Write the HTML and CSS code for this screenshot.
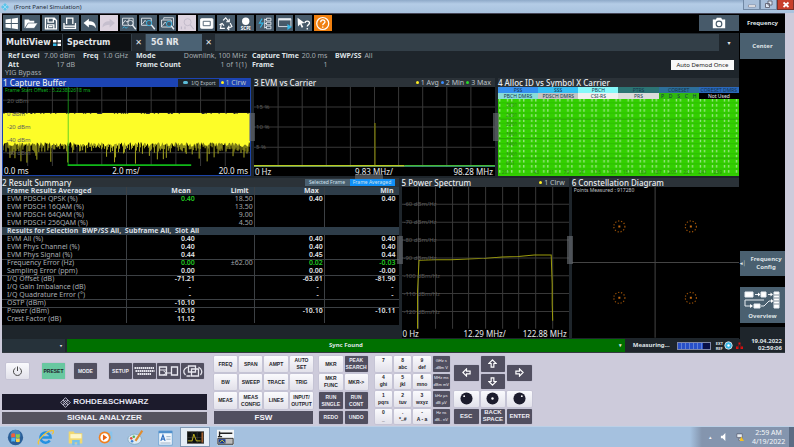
FILE: index.html
```html
<!DOCTYPE html>
<html lang="en">
<head>
<meta charset="utf-8">
<meta name="viewport" content="width=device-width, initial-scale=1">
<title>Signal Analyzer</title>
<link rel="stylesheet" href="styles.css">
</head>
<body>
<header class="titlebar">
  <svg class="ic" viewBox="0 0 8 8"><path d="M4 0l4 4-4 4-4-4z" fill="#5cc4ea"/><path d="M2 2l4 4M6 2L2 6" stroke="#c6e8fa" stroke-width=".6"/></svg>
  <span>(Front Panel Simulation)</span>
  <div class="winbtns">
    <button aria-label="Minimize"><svg viewBox="0 0 14 9"><path d="M4 5h7v2H4z" fill="#fff" stroke="#667" stroke-width=".5"/></svg></button>
    <button aria-label="Restore"><svg viewBox="0 0 14 9"><path d="M6.500 1h4v4h-4zM4 3.500h4v4H4z" fill="#dfe8f4" stroke="#556" stroke-width=".8"/></svg></button>
    <button class="close" aria-label="Close"><svg viewBox="0 0 14 9"><path d="M5 2.500l5 4.500M10 2.500L5 7" stroke="#fff" stroke-width="1.700"/></svg></button>
  </div>
</header>

<div class="app">
  <main class="main">
    <nav class="toolbar">
      <div class="tools">
        <button aria-label="Windows"><svg viewBox="0 0 18 17"><path d="M2 4l6-1v5H2zM9 3l7-1v6H9zM2 9h6v5l-6-1zM9 9h7v6l-7-1z" fill="#fff"/></svg></button>
        <button aria-label="Open"><svg viewBox="0 0 18 17"><path d="M2 14V4h5l1 1.500h5V8H6z" fill="#fff"/><path d="M6 8h11l-4 6H2.500z" fill="#fff" stroke="#475a6a" stroke-width=".7"/></svg></button>
        <button aria-label="Save"><svg viewBox="0 0 18 17" fill="none" stroke="#fff" stroke-width="1.500"><path d="M3 2.500h10l2.500 2.500v9.500H3zM6 3v4h6V3M5.500 14.500V10h7v4.500M7 12h4"/></svg></button>
        <button aria-label="Print"><svg viewBox="0 0 18 17" fill="none" stroke="#fff" stroke-width="1.500"><path d="M5.500 9V2.500h7V9M2.500 8v6h13V8"/><path d="M3 11.500h12"/></svg></button>
        <button aria-label="Undo"><svg viewBox="0 0 18 17"><path d="M2 8l6-5v3c5 0 8 2 8 8-2-3-4-4-8-4v3z" fill="#fff"/></svg></button>
        <button class="off" aria-label="Redo"><svg viewBox="0 0 18 17"><path d="M16 8l-6-5v3c-5 0-8 2-8 7 2-2 4-3 8-3v3z" fill="#c6bfce"/></svg></button>
        <button aria-label="Zoom graph"><svg viewBox="0 0 18 17" fill="none" stroke="#e8edf2"><path d="M2 2.500h12v8H2zM2 9l3-4 2 2 3-4"/><path d="M2 14l2-2 2 2 2-2" stroke="#35b7e6"/><circle cx="11" cy="8" r="3" fill="#475a6a"/><path d="M13 10l4 5" stroke-width="1.600"/></svg></button>
        <button aria-label="Zoom"><svg viewBox="0 0 18 17" fill="none" stroke="#e8edf2"><path d="M2 2.500h11v8H2zM3 9l3-4 2 2"/><circle cx="10.500" cy="8" r="3" fill="#475a6a" stroke="#35b7e6"/><path d="M13 10l4 5" stroke-width="1.600"/></svg></button>
        <button aria-label="Multi zoom"><svg viewBox="0 0 18 17" fill="none" stroke="#e8edf2"><path d="M4.500 4V2h11v9M2 4.500h11v8H2zM3 11l3-4 2 2"/><circle cx="10.500" cy="9" r="3" fill="#475a6a" stroke="#35b7e6"/><path d="M13 11l3 4" stroke-width="1.600"/></svg></button>
        <button class="off" aria-label="Zoom off"><svg viewBox="0 0 18 17" fill="none" stroke="#bfb8c8"><circle cx="10" cy="7" r="4"/><path d="M13 10l4 5M3 12v3M7 12v3" stroke-width="1.300"/></svg></button>
        <button aria-label="Full screen"><svg viewBox="0 0 18 17" fill="none" stroke="#fff"><rect x="2" y="3" width="14" height="11" rx="1" fill="#fff"/><path d="M5 6h8v5H5z" stroke="#475a6a"/></svg></button>
        <button aria-label="Sequencer"><svg viewBox="0 0 18 17" fill="none" stroke="#fff" stroke-width="1.300"><path d="M6 5l3-3 3 4M9.500 6.500H13V3M14 8l2 4-4 2M13 11l-2 3 2 2M8 14H3l1-5M2 10l3-1.500L7 11"/></svg></button>
        <button aria-label="SCPI"><svg viewBox="0 0 18 17"><circle cx="9" cy="6" r="4.200" fill="#fff"/><text class="icontext" x="9" y="15.500" text-anchor="middle">SCPI</text></svg></button>
        <button aria-label="Tree"><svg viewBox="0 0 18 17" fill="none" stroke="#e8edf2"><path d="M9 3v11M9 4h2M9 8.500h2M9 13h2"/><path d="M11 2.500h5v3h-5zM11 7h5v3h-5zM11 11.500h5v3h-5z"/><path d="M6 3L3 8h4l-3 5" stroke="#35b7e6" stroke-width="1.300"/></svg></button>
        <button aria-label="Window"><svg viewBox="0 0 18 17"><path d="M2 3h14v9H2z" fill="none" stroke="#e8edf2"/><path d="M2 3h14v2H2z" fill="#e8edf2"/><path d="M12 9l5 3.500-5 3.500z" fill="#35b7e6"/></svg></button>
        <button aria-label="Context help"><svg viewBox="0 0 18 17"><path d="M2 2l8 6-3.500.5 2 4-1.800.8-1.700-4L2.500 12z" fill="#fff"/><path d="M10.500 8c0-3 5-3 5 0 0 2-2.500 2-2.500 4M13 13.500v1.800" stroke="#fff" stroke-width="1.500" fill="none"/></svg></button>
        <button class="help" aria-label="Help"><svg viewBox="0 0 18 17"><circle cx="9" cy="8.500" r="6.800" fill="none" stroke="#fff" stroke-width="1.400"/><path d="M6.700 7c0-3.500 5-3.200 4.800-.3C11.300 8.500 9 8.500 9 10.500M9 11.800v1.600" stroke="#fff" stroke-width="1.500" fill="none"/></svg></button>
      </div>
      <button class="camera" aria-label="Screenshot"><svg viewBox="0 0 18 17"><path d="M2 4h3.500l1-2h5l1 2H16v10H2z" fill="#fff"/><circle cx="9" cy="9" r="3.200" fill="none" stroke="#475a6a" stroke-width="1.300"/></svg></button>
    </nav>

    <div class="tabs">
      <button class="tab first">MultiView <svg class="ic" viewBox="0 0 8 6"><path d="M0 0h3.500v2.500H0zM4.500 0H8v2.500H4.500zM4.500 3.500H8V6H4.500z" fill="#fff"/><path d="M0 3.500h3.500V6H0z" fill="#35b7e6"/></svg></button>
      <button class="tab">Spectrum</button><button class="x" aria-label="Close Spectrum">✕</button>
      <button class="tab on">5G NR</button><button class="x" aria-label="Close 5G NR">✕</button>
      <button class="more" aria-label="More tabs">▾</button>
    </div>

    <section class="info">
      <dl>
        <div class="pair a"><dt>Ref Level</dt><dd>7.00 dBm</dd><dt>Att</dt><dd>17 dB</dd></div>
        <div class="pair b"><dt>Freq</dt><dd>1.0 GHz</dd></div>
        <div class="pair c"><dt>Mode</dt><dd>Downlink, 100 MHz</dd><dt>Frame Count</dt><dd>1 of 1(1)</dd></div>
        <div class="pair d"><dt>Capture Time</dt><dd>20.0 ms</dd><dt>Frame</dt><dd>1</dd></div>
        <div class="pair"><dt>BWP/SS</dt><dd>All</dd></div>
      </dl>
      <p>YIG Bypass</p>
      <button class="demod">Auto Demod Once</button>
    </section>

    <div class="windows">
      <div class="row top">
        <section class="win active">
          <h2><span>1 Capture Buffer</span><button class="iq"><i></i>I/Q Export</button><b class="y"></b>1 Clrw</h2>
          <div class="plot">
            <svg id="capture" viewBox="0 0 248 82" preserveAspectRatio="none"></svg>
            <p class="note green">Frame Start Offset : 5.223802618 ms</p>
            <ul class="ylab cap"><li>20 dBm</li><li>0 dBm</li><li>-20 dBm</li><li>-40 dBm</li><li>-60 dBm</li></ul>
          </div>
          <footer><span>0.0 ms</span><span>2.0 ms/</span><span>20.0 ms</span></footer>
        </section>
        <section class="win">
          <h2><span>3 EVM vs Carrier</span><b class="y"></b>1 Avg<b class="bl"></b>2 Min<b class="g"></b>3 Max</h2>
          <div class="plot">
            <svg viewBox="0 0 240 80" preserveAspectRatio="none" fill="none">
              <path d="M24 0v80M48 0v80M72 0v80M96 0v80M120 0v80M144 0v80M168 0v80M192 0v80M216 0v80M0 20h240M0 40h240M0 60h240" stroke="#383838"/>
              <path d="M0 79.500h240" stroke="#2878c8"/><path d="M0 78.500h150" stroke="#b8cc20" stroke-width="1.500"/><path d="M150 78.500h90" stroke="#48b838" stroke-width="1.500"/>
              <path d="M120.500 78V36" stroke="#8c8c00"/>
            </svg>
            <ul class="ylab evm"><li>15 %</li><li>10 %</li><li>5 %</li></ul>
          </div>
          <footer><span>0 Hz</span><span>9.83 MHz/</span><span>98.28 MHz</span></footer>
          <i class="handle l"></i><i class="handle bottom"></i>
        </section>
        <section class="win">
          <h2><span>4 Alloc ID vs Symbol X Carrier</span></h2>
          <div class="legend">
            <span class="pss">PSS</span><span class="sss">SSS</span><span class="pbch">PBCH</span><span class="ptrs">PTRS</span><span class="cor">CORESET</span><span class="cord">CORESET DMRS</span>
            <span class="pbd">PBCH DMRS</span><span class="pdd">PDSCH DMRS</span><span class="csi">CSI-RS</span><span class="prs">PRS</span><span class="pdsch"><i>P</i><i>D</i><i>S</i><i>C</i><i>H</i></span><span class="nu">Not Used</span>
          </div>
          <div class="plot alloc">
            <svg viewBox="0 0 240 76" preserveAspectRatio="none">
              <defs><pattern id="pilot" width="12" height="5" patternUnits="userSpaceOnUse"><path d="M9 0h1.300v2.500H9zM1 0h1.300v2.500H1z" fill="#9be488"/><path d="M0 4h12" stroke="#2cb804" stroke-width=".8"/></pattern></defs>
              <path d="M0 0h240v76H0z" fill="#33d000"/><path d="M0 0h240v74H0z" fill="url(#pilot)"/>
              <path d="M0 20h240M0 39h240M0 58h240" stroke="#259a06" stroke-width=".6"/>
            </svg>
            <ul class="ylab al"><li>3001</li><li>2601</li><li>2201</li><li>1801</li><li>1401</li><li>1001</li><li>601</li></ul>
            <ul class="xlab"><li>201</li><li></li><li>43</li><li>61</li><li>79</li><li>97</li><li>115</li><li>133</li><li>151</li><li>169</li><li>187</li><li>205</li><li>223</li><li>241</li><li>259</li><li></li></ul>
          </div>
          <i class="handle l"></i>
        </section>
      </div>

      <div class="row bot">
        <section class="win">
          <h2><span>2 Result Summary</span><button class="seg">Selected Frame</button><button class="seg on">Frame Averaged</button></h2>
          <table>
            <colgroup><col class="c1"><col class="c2"><col class="c3"><col class="c4"><col class="c5"></colgroup>
            <thead><tr><th>Frame Results Averaged</th><th>Mean</th><th>Limit</th><th>Max</th><th>Min</th></tr></thead>
            <tbody>
              <tr><td>EVM PDSCH QPSK (%)</td><td class="gr">0.40</td><td>18.50</td><td>0.40</td><td>0.40</td></tr>
              <tr><td>EVM PDSCH 16QAM (%)</td><td></td><td>13.50</td><td></td><td></td></tr>
              <tr><td>EVM PDSCH 64QAM (%)</td><td></td><td>9.00</td><td></td><td></td></tr>
              <tr><td>EVM PDSCH 256QAM (%)</td><td></td><td>4.50</td><td></td><td></td></tr>
              <tr><th colspan="5">Results for Selection&nbsp; BWP/SS All,&nbsp; Subframe All,&nbsp; Slot All</th></tr>
              <tr><td>EVM All (%)</td><td>0.40</td><td></td><td>0.40</td><td>0.40</td></tr>
              <tr><td>EVM Phys Channel (%)</td><td>0.40</td><td></td><td>0.40</td><td>0.40</td></tr>
              <tr><td>EVM Phys Signal (%)</td><td>0.44</td><td></td><td>0.45</td><td>0.44</td></tr>
              <tr class="ln"><td>Frequency Error (Hz)</td><td class="gr">0.00</td><td>±62.00</td><td class="gr">0.02</td><td class="gr">-0.03</td></tr>
              <tr><td>Sampling Error (ppm)</td><td>0.00</td><td></td><td>0.00</td><td>-0.00</td></tr>
              <tr class="ln"><td>I/Q Offset (dB)</td><td>-71.21</td><td></td><td>-63.61</td><td>-81.90</td></tr>
              <tr class="dash"><td>I/Q Gain Imbalance (dB)</td><td>-</td><td></td><td>-</td><td>-</td></tr>
              <tr class="dash"><td>I/Q Quadrature Error (°)</td><td>-</td><td></td><td>-</td><td>-</td></tr>
              <tr class="ln"><td>OSTP (dBm)</td><td>-10.10</td><td></td><td></td><td></td></tr>
              <tr class="ln"><td>Power (dBm)</td><td>-10.10</td><td></td><td>-10.10</td><td>-10.11</td></tr>
              <tr><td>Crest Factor (dB)</td><td>11.12</td><td></td><td></td><td></td></tr>
            </tbody>
          </table>
          <div class="rest"></div>
        </section>
        <section class="win">
          <h2><span>5 Power Spectrum</span><b class="y"></b>1 Clrw</h2>
          <div class="plot">
            <svg viewBox="0 0 167 143" preserveAspectRatio="none" fill="none">
              <path d="M16.500 0v143M33.500 0v143M50.500 0v143M66.500 0v143M83.500 0v143M100.500 0v143M116.500 0v143M133.500 0v143M150.500 0v143M0 17.500h167M0 35.500h167M0 53.500h167M0 71.500h167M0 89.500h167M0 107.500h167M0 125.500h167" stroke="#383838"/>
              <path d="M15.500 143V105L17 74l16-.5h16L82 72l18-1.500 16-.5 16-1.500h17L150 98v20l.5 17" stroke="#9c9c0c"/>
            </svg>
            <ul class="ylab pow"><li>-60 dBm/Hz</li><li>-70 dBm/Hz</li><li>-80 dBm/Hz</li><li>-90 dBm/Hz</li><li>-100 dBm/Hz</li><li>-110 dBm/Hz</li><li>-120 dBm/Hz</li></ul>
          </div>
          <footer><span>0 Hz</span><span>12.29 MHz/</span><span>122.88 MHz</span></footer>
          <i class="handle l"></i>
        </section>
        <section class="win">
          <h2><span>6 Constellation Diagram</span></h2>
          <div class="plot">
            <svg viewBox="0 0 166 151" fill="none" preserveAspectRatio="none">
              <path d="M82.500 0v151M0 75.500h166" stroke="#444"/>
              <g stroke="#9c5208" stroke-width="1.200" stroke-dasharray="1.200 1.800"><circle cx="47" cy="39.500" r="5.500"/><circle cx="118" cy="39.500" r="5.500"/><circle cx="47" cy="111" r="5.500"/><circle cx="118" cy="111" r="5.500"/></g>
              <path d="M46 38.500h2v2h-2zM117 38.500h2v2h-2zM46 110h2v2h-2zM117 110h2v2h-2z" fill="#c06810"/>
            </svg>
            <p class="note">Points Measured : 917280</p>
          </div>
          <i class="handle l"></i>
        </section>
      </div>
    </div>
  </main>

  <aside class="side">
    <h3>Frequency</h3>
    <button class="s1">Center</button>
    <div class="gap1"></div>
    <button class="s2"><i>◂│</i><span>Frequency Config</span></button>
    <div class="gap2"></div>
    <button class="s3">
      <svg viewBox="0 0 36 18" fill="none" stroke="#e8edf2"><path d="M1 1h8v5H1zM17 1h5v5h-5zM10 13h6v4h-6z" fill="#fff"/><path d="M30 1h5v16h-5z" fill="#fff"/><path d="M30 4h5M30 7h5M30 10h5M30 13h5" stroke="#4a6070" stroke-width=".7"/><path d="M11 3.500h4M24 3.500h4M20 9H1v6h7M17 15h3l5-5h3"/><path d="M14 1.500l2.500 2-2.500 2zM26.500 1.500l2.500 2-2.500 2zM6 13l3 2-3 2zM27 8l2.500 2-2.500 2z" fill="#fff" stroke="none"/></svg>
      Overview
    </button>
    <div class="fill"></div>
  </aside>

  <div class="status">
    <span class="s-left">▾</span>
    <span class="s-msg">Sync Found<i>▾</i></span>
    <span class="meas">Measuring...</span>
    <span class="prog"><i></i></span>
    <span class="ext">EXT<br>REF</span>
    <svg class="dot ref" viewBox="0 0 9 9"><circle cx="4.500" cy="4.500" r="3.700" fill="#35b7e6" stroke="#cdd6de"/><circle cx="4.500" cy="4.500" r="1.200" fill="#fff"/></svg>
    <svg class="dot" viewBox="0 0 9 9"><path d="M3.500 1.500h2v2h-2zM1 5.500h2.500V8H1zM5.500 5.500H8V8H5.500z" fill="#e01010"/><path d="M4.500 3L2 7M4.500 3L7 7" stroke="#a01010" stroke-width=".6"/></svg>
    <time>19.04.2022<br>02:59:06</time>
  </div>
</div>

<section class="panel">
  <div class="sys">
    <div class="sysrow">
      <button class="key power" aria-label="Power"><svg viewBox="0 0 12 12" fill="none" stroke="#444"><path d="M4 3a4 4 0 1 0 4 0M6 1.500V6"/></svg></button>
      <button class="key preset">PRESET</button>
      <button class="key dk mode">MODE</button>
      <button class="key dk">SETUP</button>
      <button class="key dk" aria-label="Keyboard"><svg viewBox="0 0 22 12" fill="none" stroke="#e8e8f0"><path d="M1 3h20M2 6h19M4 9h14" stroke-width="2" stroke-dasharray="1.500 .5"/></svg></button>
      <button class="key dk" aria-label="Display"><svg viewBox="0 0 22 12" fill="none" stroke="#e8e8f0"><path d="M2 2h7v8H2zM14 2h6v8h-6z" stroke-width="1.300"/><path d="M2 5h7M9 8h5M6 6l3 2-3 2"/></svg></button>
      <button class="key dk" aria-label="Switch window"><svg viewBox="0 0 22 12" fill="none" stroke="#e8e8f0"><path d="M7 1h7v6H7zM10 4h7v7h-7zM4 10c-3-3-2-6 2-8M5 11h4M17 2c4 2 4 6 2 8" stroke-width="1.300"/></svg></button>
    </div>
    <div class="brand"><svg viewBox="0 0 12 12" fill="none" stroke="#c8c8dc"><path d="M6 .7L11.300 6 6 11.300.7 6zM3.300 3.300l5.400 5.400M8.700 3.300L3.300 8.700M6 3.500L8.500 6 6 8.500 3.500 6z"/></svg>ROHDE&amp;SCHWARZ</div>
    <div class="model">SIGNAL ANALYZER</div>
  </div>
  <div class="keys k4">
    <button class="key">FREQ</button><button class="key">SPAN</button><button class="key">AMPT</button><button class="key">AUTO<br>SET</button>
    <button class="key">BW</button><button class="key">SWEEP</button><button class="key">TRACE</button><button class="key">TRIG</button>
    <button class="key">MEAS</button><button class="key">MEAS<br>CONFIG</button><button class="key">LINES</button><button class="key">INPUT/<br>OUTPUT</button>
    <div class="fsw">FSW</div>
  </div>
  <div class="keys k2">
    <button class="key">MKR</button><button class="key dk">PEAK<br>SEARCH</button>
    <button class="key">MKR<br>FUNC</button><button class="key">MKR-&gt;</button>
    <button class="key dk">RUN<br>SINGLE</button><button class="key dk">RUN<br>CONT</button>
    <button class="key dk">REDO</button><button class="key dk">UNDO</button>
  </div>
  <div class="keys num">
    <button class="key">7<br>&nbsp;</button><button class="key">8<br>abc</button><button class="key">9<br>def</button><button class="key dk unit">GHz s<br>-dBm V</button>
    <button class="key">4<br>ghi</button><button class="key">5<br>jkl</button><button class="key">6<br>mno</button><button class="key dk unit">MHz ms<br>dBm mV</button>
    <button class="key">1<br>pqrs</button><button class="key">2<br>tuv</button><button class="key">3<br>wxyz</button><button class="key dk unit">kHz µs<br>dB µV</button>
    <button class="key">0<br>_</button><button class="key">.<br>*..#</button><button class="key">-<br>A - a</button><button class="key dk unit">Hz ns<br>dB.. nV</button>
  </div>
  <div class="keys nav">
    <button class="key dk side-l" aria-label="Left"><svg viewBox="0 0 10 10"><path d="M1 5l4-4v2.500h4v3H5V9z" fill="none" stroke="#fff" stroke-width="1.300"/></svg></button>
    <button class="key dk up" aria-label="Up"><svg viewBox="0 0 10 10"><path d="M5 1l4 4H6.500v4h-3V5H1z" fill="none" stroke="#fff" stroke-width="1.300"/></svg></button>
    <button class="key dk side-r" aria-label="Right"><svg viewBox="0 0 10 10"><path d="M9 5L5 1v2.500H1v3h4V9z" fill="none" stroke="#fff" stroke-width="1.300"/></svg></button>
    <button class="key dk down" aria-label="Down"><svg viewBox="0 0 10 10"><path d="M5 9l4-4H6.500V1h-3v4H1z" fill="none" stroke="#fff" stroke-width="1.300"/></svg></button>
    <button class="key knob" aria-label="Turn left"><svg viewBox="0 0 14 14"><circle cx="7" cy="7" r="6.500" fill="#1c1c2c"/><circle cx="4.500" cy="4.500" r="1" fill="#fff"/></svg></button>
    <button class="key knob" aria-label="Press knob"><svg viewBox="0 0 14 14"><circle cx="7" cy="7" r="6.500" fill="#1c1c2c"/><circle cx="7" cy="7" r="1.300" fill="#fff"/></svg></button>
    <button class="key knob" aria-label="Turn right"><svg viewBox="0 0 14 14"><circle cx="7" cy="7" r="6.500" fill="#1c1c2c"/><circle cx="9.500" cy="4.500" r="1" fill="#fff"/></svg></button>
    <button class="key dk">ESC</button><button class="key dk">BACK<br>SPACE</button><button class="key dk">ENTER</button>
  </div>
</section>

<footer class="taskbar">
  <button aria-label="Start"><svg viewBox="0 0 20 20"><circle cx="10" cy="10" r="9" fill="#2a5f98"/><circle cx="10" cy="7" r="6" fill="#5c9cd0" opacity=".6"/><path d="M5 6q2-1.500 4.500-.5v4Q7 9 5 10z" fill="#f0603a"/><path d="M10.500 6q2 1 4.500 0v4q-2 1-4.500 0z" fill="#90cc40"/><path d="M5 11q2-1 4.500 0v4Q7 14 5 15z" fill="#50b4f4"/><path d="M10.500 11q2 1 4.500 0v4q-2 1-4.500 0z" fill="#fcd040"/></svg></button>
  <button aria-label="Internet Explorer"><svg viewBox="0 0 20 20" fill="none"><path d="M15 13.500A6 6 0 1 1 16 10H5" stroke="#2490e0" stroke-width="3"/><path d="M2 18C-1 14 12 1 19 2c1 1 0 3-1 4" stroke="#f4c430" stroke-width="1.500"/></svg></button>
  <button aria-label="Explorer"><svg viewBox="0 0 20 20"><path d="M2 3h6l1 2h9v12H2z" fill="#f0d870"/><path d="M4 6h13v5H4z" fill="#fdf6c8"/><path d="M6 19v-6h9v6h-3v-3H9v3z" fill="#78c0ea"/></svg></button>
  <button aria-label="Media Player"><svg viewBox="0 0 20 20"><rect x="6" y="3" width="12" height="13" rx="1" fill="#88c4ec"/><circle cx="9" cy="10" r="7" fill="#f08020"/><circle cx="9" cy="10" r="5" fill="#fff"/><path d="M7 6.500l5 3.500-5 3.500z" fill="#e86010"/></svg></button>
  <button aria-label="Paint"><svg viewBox="0 0 20 20"><ellipse cx="9" cy="12" rx="8" ry="6" fill="#dcebf4" stroke="#80a8c0"/><circle cx="5" cy="11" r="1.500" fill="#e05040"/><circle cx="8" cy="9" r="1.500" fill="#50b050"/><circle cx="6" cy="14.500" r="1.500" fill="#4080d0"/><path d="M18 2l-8 12" stroke="#e08c30" stroke-width="2.500"/></svg></button>
  <button aria-label="WordPad"><svg viewBox="0 0 20 20"><path d="M2 3h16v16H2z" fill="#f0f6fc" stroke="#6ca0d0"/><path d="M2 2h16v3H2z" fill="#5090cc"/><path d="M4.500 14L7 7l2.500 7M5.500 12h3" stroke="#3070c0" stroke-width="1.400" fill="none"/><path d="M11 9h5M11 12h5M4 16.500h12" stroke="#90a8c0"/></svg></button>
  <button class="run" aria-label="Signal Analyzer"><svg viewBox="0 0 20 16"><path d="M0 1h20v14H0z" fill="#0c1010" stroke="#666"/><path d="M6 1v14M12 1v14M0 8h20" stroke="#444" stroke-width=".6"/><path d="M1 12h5l2-8 3 8h5" fill="none" stroke="#d8c820"/><path d="M17 2h2v12h-2z" fill="#a06030"/></svg></button>
  <button aria-label="Front Panel"><svg viewBox="0 0 20 18"><path d="M0 0h20v18H0z" fill="#f4f6f8"/><path d="M3 2v6M3 4h15M1 8h5" stroke="#222" stroke-width="1.600"/><path d="M1 10h18v7H1z" fill="#bbb" stroke="#222"/><path d="M2 11h8v5H2z" fill="#183890"/><path d="M3 15l3-3 3 3" stroke="#e8e020" fill="none"/></svg></button>
  <div class="tray">
    <span>▴</span>
    <svg viewBox="0 0 9 9"><path d="M1 3h2l3-3v9L3 6H1z" fill="#fff"/></svg>
    <svg viewBox="0 0 9 9"><path d="M1 1h6v4H1zM3 6h4v2H3z" fill="#e8eef4" stroke="#445" stroke-width=".6"/><path d="M6 4l3 5H4z" fill="#f4c020"/></svg>
    <time>2:59 AM<br>4/19/2022</time>
  </div>
</footer>
<script src="app.js"></script>
</body>
</html>
```
FILE: styles.css
```css
* { box-sizing: border-box; }
:root {
  --panel: #1e252b;
  --head: #2b3238;
  --btn: #4a6070;
  --fp: #cdcbdb;
}
body {
  margin: 0;
  min-height: 100vh;
  display: flex;
  flex-direction: column;
  background: var(--fp);
  color: #dfe3e6;
  font: 7px/8px "Noto Sans", "Open Sans", sans-serif;
}
button { font: inherit; color: inherit; border: 0; padding: 0; margin: 0; background: none; }
h2, h3, p, dl, dd, ul { margin: 0; padding: 0; }
ul { list-style: none; }
i { font-style: normal; }
svg { display: block; }

.titlebar {
  display: flex;
  align-items: center;
  gap: 5px;
  height: 13px;
  padding-left: 1px;
  background: linear-gradient(#8ea9c8, #b4cce6 30%, #a8c2de);
  color: #222c38;
  font-size: 6px;
}
.titlebar > .ic { width: 8px; height: 8px; }
.winbtns { margin-left: auto; display: flex; align-self: flex-start; }
.winbtns button { width: 17px; height: 10px; border: 1px solid #7088a4; border-top: 0; background: #a8bfda; }
.winbtns svg { width: 100%; height: 9px; }
.winbtns .close { background: #c8402c; border-color: #7a3028; }

.app {
  flex: 1;
  display: grid;
  grid-template-columns: minmax(0, 736fr) minmax(0, 46fr);
  grid-template-rows: minmax(0, 1fr) 14px;
  margin: 0 9px 0 2px;
  background: #000;
  border-top: 1px solid #445;
}
.main { display: flex; flex-direction: column; background: var(--panel); min-width: 0; }

.toolbar { display: flex; justify-content: space-between; background: #000; height: 19px; padding: 1px 0 2px 1px; }
.tools { display: grid; grid-template-columns: repeat(17, 1fr); gap: 2px; width: 44.7%; }
.tools button, .camera { background: #475a6a; display: flex; align-items: center; justify-content: center; }
.tools svg { width: 100%; height: 15px; }
.tools .off { background: #ddd3df; }
.tools .help { background: #f08010; }
.camera { width: 40px; }
.camera svg { width: 16px; height: 15px; }
.icontext { font: bold 5px "Noto Sans", sans-serif; fill: #fff; }

.tabs { display: flex; height: 17px; background: #333f48; font: bold 8px/16px "DejaVu Sans", sans-serif; color: #e2e5e8; margin-top: 1px; }
.tab { background: #0e1114; text-align: left; width: 68px; padding-left: 4px; margin-right: 1px; }
.tab.first { width: 60px; display: flex; align-items: center; justify-content: space-between; padding: 0 1px 0 4px; }
.tab .ic { width: 8px; height: 6px; }
.tab.on { background: #4b6274; width: 56px; margin: 0 0 0 1px; padding-left: 5px; }
.x { width: 13px; background: #222a31; }
.more { margin-left: auto; width: 20px; background: var(--panel); font-size: 6px; }

.info { position: relative; height: 27px; color: #a4abb0; }
.info dl { display: flex; padding: 0 0 0 6px; }
.pair { display: grid; grid-template-columns: auto auto; column-gap: 3px; line-height: 9px; align-content: start; justify-content: space-between; margin-right: 8px; white-space: nowrap; }
.pair dt { font-weight: bold; color: #dfe3e6; }
.pair dd { text-align: right; }
.pair.a { width: 67px; }
.pair.b { width: 45px; }
.pair.c { width: 108px; }
.pair.d { width: 75px; }
.info p { padding-left: 3px; line-height: 8px; }
.demod { position: absolute; right: 5px; top: 9px; width: 63px; height: 10px; background: #f8f8f8; color: #222; font-size: 6px; line-height: 10px; }

.windows { flex: 1; display: flex; flex-direction: column; gap: 2px; padding-bottom: 1px; min-height: 0; }
.row { display: grid; gap: 3px; min-height: 0; flex: 99 1 0; }
.row.bot { flex: 161 1 0; }
.top { grid-template-columns: minmax(0, 249fr) minmax(0, 241fr) minmax(0, 241fr); }
.bot { grid-template-columns: minmax(0, 396fr) minmax(0, 167fr) minmax(0, 167fr); }
.win { position: relative; display: flex; flex-direction: column; background: #000; min-height: 0; }
.win h2 { display: flex; align-items: center; gap: 2px; height: 9px; flex: none; background: var(--head); font-size: 7px; font-weight: normal; color: #bcc2c8; padding-right: 4px; white-space: nowrap; }
.win h2 span { color: #e8ebee; font-weight: 500; font-size: 8px; margin-right: auto; }
.win h2 b { width: 3px; height: 3px; border-radius: 50%; }
.y { background: #ffee22; } .bl { background: #3a8cff; } .g { background: #28d828; }
.active { border: 1px solid #1c44a8; border-top: 0; }
.active h2 { background: #1c44b4; }
.iq { display: flex; align-items: center; gap: 4px; background: #1e252b; width: 41px; height: 8px; font-size: 5px; padding: 0 2px 0 5px; }
.iq i { width: 5px; height: 3px; border-radius: 2px; background: #5cbcd8; }
.plot { position: relative; flex: 1; min-height: 0; }
.plot > svg { position: absolute; inset: 0; width: 100%; height: 100%; }
.note { position: absolute; left: 2px; top: 1px; font-size: 5px; line-height: 5px; color: #c0c4c8; }
.note.green { color: #10b020; }
.ylab { position: absolute; left: 2px; top: 0; height: 100%; display: flex; flex-direction: column; color: #5c5c5c; font-size: 6px; justify-content: space-between; }
.cap { padding: 10px 0 9px; left: 4px; }
.evm { padding: 16px 0; }
.al { padding: 2px 0 9px; left: 8px; color: #2d8a14; font-size: 5px; }
.pow { padding: 13px 0; }
.win > footer { display: flex; height: 9px; padding: 0 2px 0 1px; font-size: 8px; line-height: 9px; color: #e8ebee; white-space: nowrap; }
.win > footer span { flex: 1 1 0; text-align: center; }
.win > footer span:first-child { text-align: left; }
.win > footer span:last-child { text-align: right; }
.handle { position: absolute; left: -5px; top: 36%; width: 6px; height: 28px; background: rgba(110, 115, 120, .6); z-index: 1; }
.handle.bottom { top: auto; bottom: -3px; left: 42%; width: 28px; height: 5px; }

.legend { display: grid; grid-template-columns: repeat(6, minmax(0, 1fr)); font-size: 5px; line-height: 6px; text-align: center; color: #14344c; white-space: nowrap; }
.pss { background: #3590f0; } .sss { background: #36bef4; } .pbch { background: #86f8fa; }
.ptrs { background: #2c7474; } .cor { background: #2d6f9a; } .cord { background: #2a68bc; }
.pbd { background: #88dcd8; } .pdd { background: #c4c4c4; } .csi { background: #f0f0f0; } .prs { background: #dcdcdc; }
.pdsch { background: #30b810; display: flex; justify-content: space-around; }
.nu { background: #000; color: #eee; }
.xlab { position: absolute; left: 2px; right: 0; bottom: 1px; display: flex; justify-content: space-between; color: #2d8a14; font-size: 5px; line-height: 6px; }
.xlab li { width: 12px; text-align: center; }

.win h2 .seg { background: #4a6070; font-size: 5px; width: 45px; height: 7px; color: #cfe0ec; line-height: 7px; margin-right: -2px; }
.win h2 .seg.on { background: #1090f8; margin-right: 0; }
table { border-collapse: collapse; table-layout: fixed; width: 100%; line-height: 8px; }
.c1 { width: 31.3%; } .c2 { width: 17.6%; } .c3 { width: 14.7%; } .c4 { width: 17.7%; } .c5 { width: 18.7%; }
td, th { height: 8px; padding: 0 1px; white-space: nowrap; text-align: right; font-weight: 600; color: #e0e3e6; }
td:last-child { padding-right: 3px; }
th { background: #2e3d49; font-weight: bold; padding-right: 5px; }
td:first-child, th:first-child { text-align: left; padding-left: 5px; font-weight: normal; color: #a8adb2; }
th:first-child { font-weight: bold; color: #d8dde0; }
td:nth-child(3) { color: #a0a5a8; font-weight: normal; }
td + td, th + th { border-left: 1px solid #3c4044; }
td:nth-child(3), th:nth-child(3) { border-left: 0; }
.ln td { box-shadow: inset 0 1px #3c4044; }
.dash td + td { padding-right: 5px; }
td.gr { color: #20c820; }
.rest { flex: 1; background: var(--panel); margin-top: 2px; }

.side { display: flex; flex-direction: column; padding-left: 1px; font: bold 6px/8px "Noto Sans", sans-serif; text-align: center; }
.side h3 { font: inherit; line-height: 19px; flex: 19; }
.side button { background: var(--btn); }
.s1 { flex: 26; }
.gap1 { flex: 193; }
.s2 { flex: 26; display: flex; align-items: center; gap: 1px; }
.s2 i { font-size: 5px; }
.s2 span { flex: 1; }
.gap2 { flex: 11; }
.s3 { flex: 36; display: flex; flex-direction: column; align-items: center; justify-content: space-evenly; }
.s3 svg { width: 36px; height: 18px; }
.fill { flex: 12; background: var(--panel); margin-top: 4px; }

.status { grid-column: 1 / -1; display: flex; align-items: stretch; background: var(--panel); border-bottom: 1px solid #333a40; font: bold 6px/13px "Noto Sans", sans-serif; gap: 5px; }
.s-left { width: 63px; background: #26323a; text-align: right; padding-right: 3px; margin-right: -3px; font-size: 4px; }
.s-msg { flex: 1; background: #007000; text-align: center; position: relative; }
.s-msg i { position: absolute; right: 3px; font-size: 5px; }
.meas { width: 42px; padding-left: 3px; }
.prog { width: 34px; height: 8px; align-self: center; border: 1px solid #8088a8; background: #081048; }
.prog i { display: block; height: 100%; width: 80%; background: repeating-linear-gradient(90deg, #2850c8 0 3px, #6080d8 3px 4px); }
.ext { font-size: 4px; line-height: 5px; padding-top: 2px; margin-right: -4px; }
.dot { width: 9px; height: 9px; align-self: center; }
.dot.ref { margin-right: -3px; }
.status time { line-height: 7px; text-align: right; width: 36px; padding-right: 3px; margin-top: -1px; }

.panel { display: grid; grid-template-columns: 202fr 101fr 50fr 77fr 77fr; column-gap: 4px; width: 67%; height: 73px; padding: 3px 0 2px 2px; font: bold 5px/7px "Liberation Sans", sans-serif; color: #1e1e2a; }
.k4 { margin-left: 3px; }
.k2 { margin-left: 2px; }
.num { margin-left: 3px; }
.key { background: linear-gradient(#fafafd, #e2e1ea); border-radius: 1px; box-shadow: 0 0 1px #8886a0; display: flex; align-items: center; justify-content: center; text-align: center; min-width: 0; min-height: 0; white-space: nowrap; }
.key.dk { background: #514f60; color: #ededf4; }
.sys { display: flex; flex-direction: column; }
.sysrow { display: flex; gap: 1px; height: 16px; margin: 7px 3px 15px 4px; flex: none; }
.sysrow .key { flex: 1; }
.sysrow svg { width: 100%; height: 12px; }
.sysrow .power { margin-right: 12px; }
.sysrow .preset { background: #68c8a0; margin-right: 8px; }
.sysrow .mode { margin-right: 11px; }
.brand { display: flex; align-items: center; justify-content: center; gap: 2px; background: #1c1b2c; color: #e4e4f0; height: 16px; font: bold 8px/16px "Liberation Sans", sans-serif; margin-bottom: 2px; flex: none; }
.brand svg { width: 11px; height: 11px; }
.model { background: #55535f; color: #f0f0f6; text-align: center; font: bold 8px/12px "Liberation Sans", sans-serif; }
.keys { display: grid; gap: 2px; grid-template-rows: repeat(4, minmax(0, 1fr)); }
.k4 { grid-template-columns: repeat(4, minmax(0, 1fr)); grid-template-rows: 16px 16px 17px 1fr; }
.k2 { grid-template-columns: repeat(2, minmax(0, 1fr)); grid-template-rows: 16px 16px 17px 1fr; }
.fsw { grid-column: 1 / -1; background: #514f60; color: #f4f4fa; font: bold 8px/13px "Liberation Sans", sans-serif; text-align: center; }
.num { grid-template-columns: repeat(4, minmax(0, 1fr)); }
.unit { font-size: 4px; font-weight: normal; }
.nav { grid-template-columns: repeat(3, minmax(0, 1fr)); font-size: 6px; }
.nav svg { width: 9px; height: 9px; }
.nav .knob svg { width: 13px; height: 13px; }
.side-l, .side-r { grid-row: 1 / 3; align-self: center; height: 16px; }
.side-l { grid-column: 1; }
.side-r { grid-column: 3; }
.up { grid-column: 2; grid-row: 1; }
.down { grid-column: 2; grid-row: 2; }

.taskbar { display: flex; align-items: stretch; height: 21px; background: #a5c1df; border-top: 1px solid #bcd0e6; }
.taskbar button { width: 30px; display: flex; align-items: center; justify-content: center; }
.taskbar button svg { width: 17px; height: 17px; }
.taskbar .run { background: #e4edf6; border: 1px solid #8098b4; }
.tray { margin-left: auto; display: flex; align-items: center; gap: 8px; width: 104px; padding: 0 5px 0 19px; background: linear-gradient(90deg, #a5c1df, #8495ae 12%); color: #f4f7fa; border-right: 5px solid #5c6c84; }
.tray svg { width: 8px; height: 8px; flex: none; }
.tray span { font-size: 5px; }
.tray time { font-size: 7px; line-height: 9px; text-align: center; }
```
FILE: app.js
```js
// Draws the capture buffer trace: a solid band with a noisy lower edge.
(function () {
  var seed = 7;
  function rnd() {
    seed = (seed * 16807) % 2147483647;
    return seed / 2147483647;
  }
  var grid = "";
  for (var i = 1; i < 10; i++) grid += "M" + i * 24.8 + " 0v82";
  for (var j = 1; j < 6; j++) grid += "M0 " + j * 13.6 + "h248";
  var band = "M0 27", tips = "";
  for (var x = 0; x <= 248; x++) band += "L" + x + " " + (27 + (rnd() > 0.8 ? 1 : 0));
  for (x = 248; x >= 0; x--) {
    band += "L" + x + " " + (57 + rnd() * 5).toFixed(1);
    if (rnd() > 0.3) tips += "M" + x + " 56V" + (61 + Math.pow(rnd(), 5) * 16 + rnd() * 4).toFixed(1);
  }
  document.getElementById("capture").innerHTML =
    '<path d="' + grid + '" stroke="#383838" fill="none"/>' +
    '<path d="' + tips + '" stroke="#a8a820" stroke-width="1" fill="none"/>' +
    '<path d="' + band + 'z" fill="#fdfd28"/>' +
    '<path d="M65.500 0v82" stroke="#20c020" opacity=".7"/>' +
    '<path d="M65 81h124" stroke="#10b818" stroke-width="2"/>';
})();
```
